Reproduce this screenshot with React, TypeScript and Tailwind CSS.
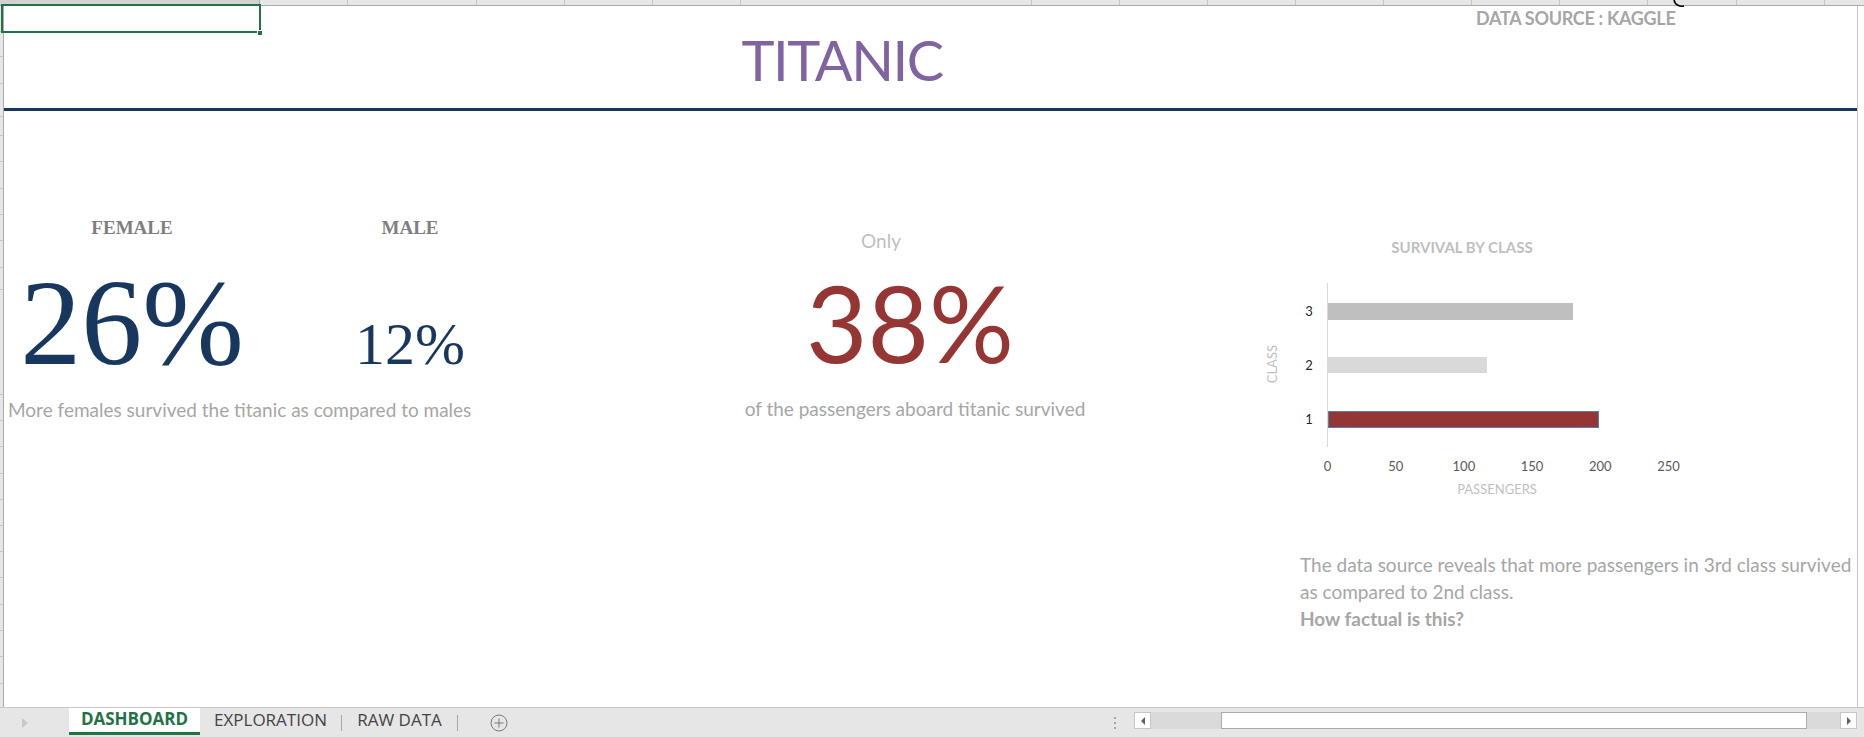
import React from 'react';

// column header widths (px), first one is the selected column A
const colWidths = [260, 88, 129, 88, 88, 88, 291, 88, 88, 88, 88, 88, 88, 88, 89, 88];
// row header heights, starting right under the column header
const rowHeights = [26, 25, 27, 33, 19, 26, 27, 26, 26, 27, 22, 105, 26, 26, 27, 26, 26, 26, 26, 27, 26, 26, 27];

const ticks = [0, 50, 100, 150, 200, 250];

const SurvivalChart = () => {
  const x0 = 49.5;
  const perUnit = 68.2 / 50;
  return (
    <div className="flex">
      <div className="flex h-[280px] w-[12px] shrink-0 items-center justify-center pb-[12px]">
        <span className="rotate-180 text-[13px] leading-none text-[#bfbfbf] [writing-mode:vertical-rl]">CLASS</span>
      </div>
      <svg width="428" height="280" className="block" fontFamily="Lato, sans-serif">
        <text x="184" y="23" textAnchor="middle" fontSize="15" fontWeight="700" fill="#bfbfbf">
          SURVIVAL BY CLASS
        </text>
        <line x1={x0} y1="53" x2={x0} y2="217" stroke="#d9d9d9" />
        <rect x="50" y="73" width="245" height="17" fill="#bfbfbf" />
        <rect x="50" y="127" width="159" height="16" fill="#d9d9d9" />
        <rect x="50.5" y="181.5" width="270" height="16" fill="#963634" stroke="#4f81bd" />
        <text x="31" y="81" textAnchor="middle" dominantBaseline="central" fontSize="13" fill="#262626">3</text>
        <text x="31" y="135" textAnchor="middle" dominantBaseline="central" fontSize="13" fill="#262626">2</text>
        <text x="31" y="189" textAnchor="middle" dominantBaseline="central" fontSize="13" fill="#262626">1</text>
        {ticks.map((t) => (
          <text
            key={t}
            x={x0 + t * perUnit}
            y="236"
            textAnchor="middle"
            dominantBaseline="central"
            fontSize="13"
            fill="#595959"
          >
            {t}
          </text>
        ))}
        <text x="219" y="259" textAnchor="middle" dominantBaseline="central" fontSize="13" fill="#bfbfbf">
          PASSENGERS
        </text>
      </svg>
    </div>
  );
};

const TabBar = () => {
  return (
    <div className="flex h-[30px] shrink-0 border-t border-[#c6c6c6] bg-[#e6e6e6] font-['Open_Sans',sans-serif] text-[17px] text-[#444444]">
      <div className="flex w-[69px] shrink-0 items-center pl-[22px]">
        <svg width="6" height="10" viewBox="0 0 6 10">
          <path d="M0 0 L6 5 L0 10 Z" fill="#c8c8c8" />
        </svg>
      </div>
      <div className="flex h-[27px] w-[131px] shrink-0 items-center justify-center border-b-[3px] border-[#217346] bg-white pb-[2px] font-bold text-[#217346]">
        DASHBOARD
      </div>
      <div className="flex w-[141px] shrink-0 items-center justify-center pb-[5px]">EXPLORATION</div>
      <div className="h-[16px] w-px shrink-0 self-center bg-[#a6a6a6]" />
      <div className="flex w-[115px] shrink-0 items-center justify-center pb-[5px]">RAW DATA</div>
      <div className="h-[16px] w-px shrink-0 self-center bg-[#a6a6a6]" />
      <div className="flex w-[82px] shrink-0 items-center justify-center">
        <svg width="18" height="18" viewBox="0 0 18 18">
          <circle cx="9" cy="9" r="8" fill="none" stroke="#7a7a7a" />
          <path d="M9 4.5 V13.5 M4.5 9 H13.5" stroke="#7a7a7a" />
        </svg>
      </div>
      <div className="flex-1" />
      <div className="flex w-[20px] shrink-0 flex-col items-center justify-center gap-[3px]">
        <div className="h-[2px] w-[2px] bg-[#a6a6a6]" />
        <div className="h-[2px] w-[2px] bg-[#a6a6a6]" />
        <div className="h-[2px] w-[2px] bg-[#a6a6a6]" />
      </div>
      <div className="w-[9px] shrink-0" />
      <div className="mt-[4px] flex h-[17px] w-[723px] shrink-0 bg-[#dadada]">
        <div className="flex w-[17px] items-center justify-center border border-[#c6c6c6] bg-white">
          <svg width="4" height="8" viewBox="0 0 4 8">
            <path d="M4 0 L0 4 L4 8 Z" fill="#606060" />
          </svg>
        </div>
        <div className="flex-1 pl-[70px] pr-[33px]">
          <div className="h-full w-full border border-[#ababab] bg-white" />
        </div>
        <div className="flex w-[17px] items-center justify-center border border-[#c6c6c6] bg-white">
          <svg width="4" height="8" viewBox="0 0 4 8">
            <path d="M0 0 L4 4 L0 8 Z" fill="#606060" />
          </svg>
        </div>
      </div>
      <div className="w-[7px] shrink-0" />
    </div>
  );
};

const App = () => {
  return (
    <div className="relative flex h-[737px] w-[1864px] flex-col overflow-hidden bg-white font-['Lato',sans-serif]">
      {/* column headers */}
      <div className="flex h-[6px] shrink-0 border-b border-[#ababab] bg-[#e6e6e6]">
        {colWidths.map((w, i) => (
          <div
            key={i}
            style={{ width: w }}
            className={i === 0 ? 'h-full shrink-0 border-r border-[#ababab] bg-[#d2d2d2]' : 'h-full shrink-0 border-r border-[#c6c6c6]'}
          />
        ))}
        <div className="flex-1" />
      </div>

      <div className="flex min-h-0 flex-1">
        {/* row headers */}
        <div className="flex w-[4px] shrink-0 flex-col overflow-hidden border-r border-[#ababab] bg-[#e6e6e6]">
          {rowHeights.map((h, i) => (
            <div key={i} style={{ height: h }} className="shrink-0 border-b border-[#c6c6c6]" />
          ))}
        </div>

        {/* sheet */}
        <div className="flex w-[1854px] shrink-0 flex-col overflow-hidden border-r border-[#c6c6c6]">
          <div className="grid h-[102px] shrink-0">
            <div className="col-start-1 row-start-1 w-[1676px] pt-[26px] text-center text-[56px] leading-none tracking-[-1.5px] text-[#8064a2]">
              TITANIC
            </div>
            <div className="col-start-1 row-start-1 pl-[1472px] pt-[3px] text-[18px] font-bold leading-none tracking-[-0.3px] text-[#a6a6a6]">
              DATA SOURCE : KAGGLE
            </div>
          </div>
          <div className="h-[3px] shrink-0 bg-[#17375e]" />

          <div className="flex flex-1">
            {/* gender */}
            <div className="w-[560px] shrink-0 pt-[107px]">
              <div className="flex font-['Liberation_Serif',serif] text-[19px] font-bold leading-none text-[#7f7f7f]">
                <div className="w-[256px] text-center">FEMALE</div>
                <div className="w-[300px] text-center">MALE</div>
              </div>
              <div className="mt-[25px] flex items-baseline font-['Liberation_Serif',serif] leading-none text-[#17375e]">
                <div className="w-[256px] text-center text-[122px]">26%</div>
                <div className="w-[300px] text-center text-[60px]">12%</div>
              </div>
              <p className="mt-[16px] whitespace-nowrap pl-[4px] text-[19px] leading-none text-[#a6a6a6]">
                More females survived the titanic as compared to males
              </p>
            </div>

            {/* overall */}
            <div className="flex w-[702px] shrink-0 flex-col items-center pt-[120px]">
              <div className="pr-[68px] text-[19px] leading-none text-[#bfbfbf]">Only</div>
              <div className="mt-[19px] pr-[10px] text-[106px] leading-none text-[#963634]">38%</div>
              <div className="mt-[24px] whitespace-nowrap text-[19px] leading-none text-[#a6a6a6]">
                of the passengers aboard titanic survived
              </div>
            </div>

            {/* class chart */}
            <div className="flex-1 pt-[119px]">
              <SurvivalChart />
              <div className="mt-[41px] whitespace-nowrap pl-[34px] text-[19px] leading-[27px] text-[#a6a6a6]">
                The data source reveals that more passengers in 3rd class survived
                <br />
                as compared to 2nd class.
                <br />
                <span className="font-bold">How factual is this?</span>
              </div>
            </div>
          </div>
        </div>
        <div className="flex-1 bg-white" />
      </div>

      <TabBar />

      {/* selected cell A1 */}
      <div className="absolute left-[1px] top-[4px] h-[29px] w-[260px] border-2 border-[#217346]" />
      <div className="absolute left-[257px] top-[30px] h-[6px] w-[6px] border border-white bg-[#217346]" />

      {/* mouse pointer tip peeking in */}
      <svg className="absolute left-[1672px] top-0" width="14" height="8" viewBox="0 0 14 8">
        <path d="M2 0 C3 5 8 7 12 6" fill="none" stroke="#000" strokeWidth="1.6" />
      </svg>
    </div>
  );
};

export default App;
